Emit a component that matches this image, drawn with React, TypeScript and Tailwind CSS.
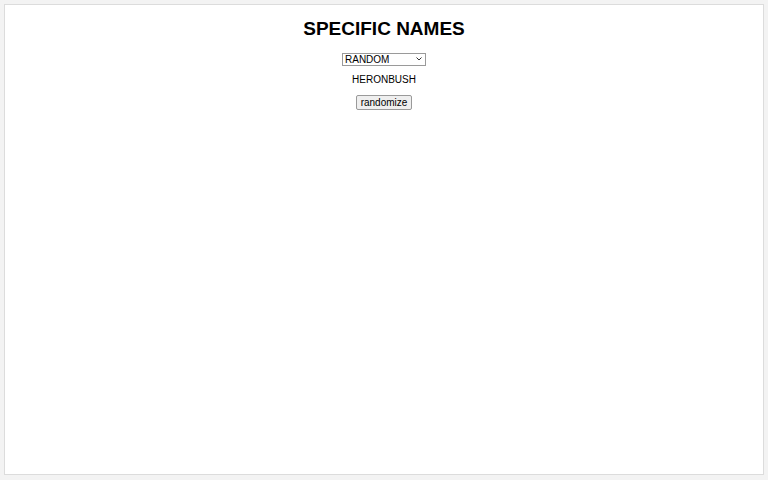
import React, { useState } from 'react';

const NAMES = ['HERONBUSH', 'MAPLEWOOD', 'STONEBROOK', 'FOXGLOVE', 'RAVENHILL'];

export default function App() {
  const [mode, setMode] = useState('RANDOM');
  const [name, setName] = useState('HERONBUSH');

  const randomize = () => {
    setName(NAMES[Math.floor(Math.random() * NAMES.length)]);
  };

  return (
    <div className="h-[480px] w-[768px] bg-[#f3f3f3] px-[4px] pt-[4px] pb-[5px] font-['Liberation_Sans',Arial,sans-serif] text-black">
      <div className="flex h-full flex-col items-center border border-[#dcdcdc] bg-white">
        <h1 className="mt-[13px] text-[19px] leading-[22px] font-bold">SPECIFIC NAMES</h1>
        <div className="relative mt-[13px] h-[13px] w-[84px]">
          <select
            value={mode}
            onChange={(e) => setMode(e.target.value)}
            className="block h-[13px] w-[84px] appearance-none border border-[#9a9a9a] bg-white py-0 pl-[2px] text-[10px] leading-[11px] outline-none"
          >
            <option>RANDOM</option>
            <option>FIRST</option>
            <option>LAST</option>
          </select>
          {/* small dropdown chevron */}
          <svg
            className="pointer-events-none absolute top-[4px] right-[4px]"
            width="6"
            height="4"
            viewBox="0 0 6 4"
            fill="none"
          >
            <path d="M0.5 0.5 L3 3 L5.5 0.5" stroke="#333" strokeWidth="1" />
          </svg>
        </div>
        <div className="mt-[8px] text-[10px] leading-[12px]">{name}</div>
        <button
          onClick={randomize}
          className="mt-[9px] h-[15px] rounded-[2px] border border-[#9a9a9a] bg-[#efefef] px-[4px] text-[10px] leading-[12px]"
        >
          randomize
        </button>
      </div>
    </div>
  );
}
